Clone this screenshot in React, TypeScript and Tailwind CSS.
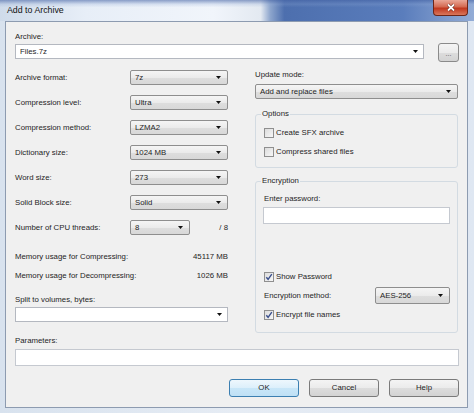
import type { ReactNode } from 'react';

// Win7 style "Add to Archive" dialog

function Arrow() {
  return (
    <svg width="5" height="3" viewBox="0 0 5 3" className="shrink-0">
      <polygon points="0,0 5,0 2.5,3" fill="#111" />
    </svg>
  );
}

function Combo({
  value,
  className = '',
  editable = false,
}: {
  value: string;
  className?: string;
  editable?: boolean;
}) {
  return (
    <div
      className={
        'flex items-center justify-between ' +
        (editable
          ? 'border border-[#b4b8c0] bg-white pl-[4px] pr-[4px] '
          : 'rounded-[2px] border border-[#8e8e8e] bg-[linear-gradient(#f5f5f5,#ebebeb_50%,#dedede_51%,#d8d8d8)] pl-[4px] pr-[6px] ') +
        className
      }
    >
      <span className="leading-none">{value}</span>
      <Arrow />
    </div>
  );
}

function Check({ checked = false, label }: { checked?: boolean; label: string }) {
  return (
    <div className="ml-[3px] flex h-[19px] items-center">
      <div className="flex h-[10px] w-[10px] items-center justify-center border border-[#8f8f8f] bg-[linear-gradient(135deg,#dcdcdc,#f7f7f7)]">
        {checked && (
          <svg width="8" height="8" viewBox="0 0 8 8">
            <path d="M1.3 4.2 L3.1 6.3 L6.8 1.2" fill="none" stroke="#3a4f8c" strokeWidth="1.4" />
          </svg>
        )}
      </div>
      <span className="ml-[2px]">{label}</span>
    </div>
  );
}

function Btn({ children, primary = false }: { children: ReactNode; primary?: boolean }) {
  return (
    <div
      className={
        'flex h-[18px] w-[70px] items-center justify-center rounded-[3px] border ' +
        (primary
          ? 'border-[#3c7fb1] bg-[linear-gradient(#eef7fd,#dceffb_50%,#c8e6f8_51%,#bfe0f5)]'
          : 'border-[#7a7a7a] bg-[linear-gradient(#f4f4f4,#ebebeb_50%,#dddddd_51%,#d3d3d3)]')
      }
    >
      {children}
    </div>
  );
}

function Row({ label, children }: { label: string; children: ReactNode }) {
  return (
    <div className="flex h-[25px] items-center">
      <span className="w-[115px]">{label}</span>
      {children}
    </div>
  );
}

export default function App() {
  return (
    <div className="flex h-[413px] w-[474px] flex-col overflow-hidden bg-[linear-gradient(90deg,#d8e2ee,#e6ecf4_50%,#dfe7f2)] font-['Liberation_Sans',Arial,sans-serif] text-[7.8px] text-[#1e1e1e]">
      {/* title bar */}
      <div className="flex h-[21px] shrink-0 items-start justify-between bg-[linear-gradient(180deg,rgba(70,100,165,0.6)_0%,rgba(140,165,210,0.25)_20%,transparent_35%),linear-gradient(90deg,#cfdbea_0%,#e7eef7_18%,#f1f5fb_45%,#e3e9f1_55%,#8ea6cd_57%,#4d6fae_60%,#5a7dbc_85%,#93acd6_100%)]">
        <span className="pl-[7px] text-[8.8px] leading-[21px] text-[#111]">Add to Archive</span>
        <div className="mr-[6px] flex h-[16px] w-[35px] items-center justify-center rounded-b-[4px] border border-t-0 border-[#6e2618] bg-[linear-gradient(#e9a797,#d46a52_45%,#c1381f_55%,#d9775c)]">
          <svg width="10" height="9" viewBox="0 0 10 9">
            <path d="M2 1.5 L8 7.5 M8 1.5 L2 7.5" stroke="#5a1a10" strokeWidth="3" />
            <path d="M2 1.5 L8 7.5 M8 1.5 L2 7.5" stroke="#fff" strokeWidth="1.8" />
          </svg>
        </div>
      </div>

      {/* client area */}
      <div className="mb-[5px] ml-[5px] mr-[6px] flex flex-1 flex-col border border-[#8d9bb0] bg-[#f0f0f0] pl-[9px] pr-[8px] pt-[9px]">
        <div className="h-[12px] leading-[12px]">Archive:</div>
        <div className="flex items-start">
          <Combo value="Files.7z" editable className="mt-[1px] h-[15px] flex-1 pr-[5px]" />
          <div className="ml-[14px] flex h-[19px] w-[21px] items-end justify-center rounded-[3px] border border-[#8a8a8a] bg-[linear-gradient(#f4f4f4,#ebebeb_50%,#dddddd_51%,#d3d3d3)] pb-[4px] text-[7px] leading-none text-[#555]">
            ...
          </div>
        </div>

        <div className="mt-[3px] flex">
          {/* left column */}
          <div className="flex w-[213px] flex-col">
            <Row label="Archive format:">
              <Combo value="7z" className="h-[15px] w-[98px]" />
            </Row>
            <Row label="Compression level:">
              <Combo value="Ultra" className="h-[15px] w-[98px]" />
            </Row>
            <Row label="Compression method:">
              <Combo value="LZMA2" className="h-[15px] w-[98px]" />
            </Row>
            <Row label="Dictionary size:">
              <Combo value="1024 MB" className="h-[15px] w-[98px]" />
            </Row>
            <Row label="Word size:">
              <Combo value="273" className="h-[15px] w-[98px]" />
            </Row>
            <Row label="Solid Block size:">
              <Combo value="Solid" className="h-[15px] w-[98px]" />
            </Row>
            <Row label="Number of CPU threads:">
              <Combo value="8" className="h-[15px] w-[60px]" />
              <span className="flex-1 text-right">/ 8</span>
            </Row>

            <div className="mt-[7px] flex h-[19px] items-center justify-between">
              <span>Memory usage for Compressing:</span>
              <span>45117 MB</span>
            </div>
            <div className="flex h-[19px] items-center justify-between">
              <span>Memory usage for Decompressing:</span>
              <span>1026 MB</span>
            </div>

            <div className="mt-[9px] h-[12px] leading-[12px]">Split to volumes, bytes:</div>
            <Combo value="" editable className="mt-[1px] h-[15px] pr-[5px]" />
          </div>

          {/* right column */}
          <div className="ml-[27px] flex w-[203px] flex-col">
            <div className="mt-[4px] h-[12px] leading-[12px]">Update mode:</div>
            <Combo value="Add and replace files" className="mt-[3px] h-[15px]" />

            <fieldset className="mt-[9px] rounded-[3px] border border-[#d3dbe2] pb-[6px] pl-[5px]">
              <legend className="h-[12px] px-[1px] leading-[12px]">Options</legend>
              <div className="mt-[3px]">
                <Check label="Create SFX archive" />
                <Check label="Compress shared files" />
              </div>
            </fieldset>

            <fieldset className="mt-[7px] rounded-[3px] border border-[#d3dbe2] pb-[8px] pl-[5px] pr-[7px]">
              <legend className="h-[12px] px-[1px] leading-[12px]">Encryption</legend>
              <div className="ml-[3px] mt-[6px] h-[12px] leading-[12px]">Enter password:</div>
              <div className="ml-[2px] mt-[2px] h-[17px] border border-[#c5c9d0] bg-white" />
              <div className="mt-[43px]">
                <Check checked label="Show Password" />
              </div>
              <div className="ml-[3px] flex h-[19px] items-center">
                <span className="w-[111px]">Encryption method:</span>
                <Combo value="AES-256" className="h-[17px] w-[75px]" />
              </div>
              <Check checked label="Encrypt file names" />
            </fieldset>
          </div>
        </div>

        <div className="mt-[2px] h-[12px] leading-[12px]">Parameters:</div>
        <div className="mt-[2px] h-[17px] border border-[#c5c9d0] bg-white" />

        <div className="mt-[13px] flex justify-end gap-[10px]">
          <Btn primary>OK</Btn>
          <Btn>Cancel</Btn>
          <Btn>Help</Btn>
        </div>
      </div>
    </div>
  );
}
